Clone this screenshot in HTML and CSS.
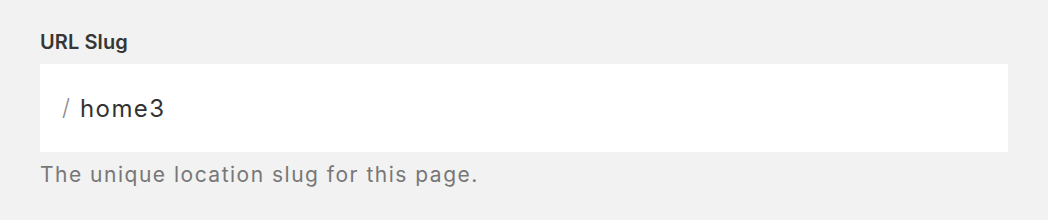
FILE: index.html
```html
<!DOCTYPE html>
<html lang="en">
  <head>
    <title>URL Slug</title>
    <link rel="stylesheet" href="styles.css">
  </head>
  <body>
    <div class="field">
      <label class="field-label" for="slug">URL Slug</label>
      <div class="slug-input">
        <span class="slug-prefix">/</span>
        <input id="slug" type="text" value="home3">
      </div>
      <p class="field-help">The unique location slug for this page.</p>
    </div>
  </body>
</html>
```

FILE: styles.css
```css
body {
  margin: 0;
  background-color: #f2f2f2;
  font-family: Inter, "Open Sans", sans-serif;
}
.field {
  padding: 28px 40px 0 40px;
}
.field-label {
  display: block;
  height: 36px;
  font-size: 20px;
  font-weight: 600;
  line-height: 28px;
  color: #363636;
  letter-spacing: 0.1px;
}
.slug-input {
  display: flex;
  align-items: center;
  height: 88px;
  background-color: #fff;
  padding: 0 22px;
  gap: 10px;
}
.slug-prefix {
  font-size: 23px;
  font-weight: 300;
  color: #8a8a8a;
}
.slug-input input {
  flex-grow: 1;
  border: none;
  outline: none;
  background: transparent;
  font-family: inherit;
  font-size: 24px;
  color: #333;
  padding: 0;
  letter-spacing: 1.4px;
}
.field-help {
  margin: 10px 0 0 0;
  font-size: 21px;
  line-height: 26px;
  color: #777;
  letter-spacing: 1.5px;
}
```
